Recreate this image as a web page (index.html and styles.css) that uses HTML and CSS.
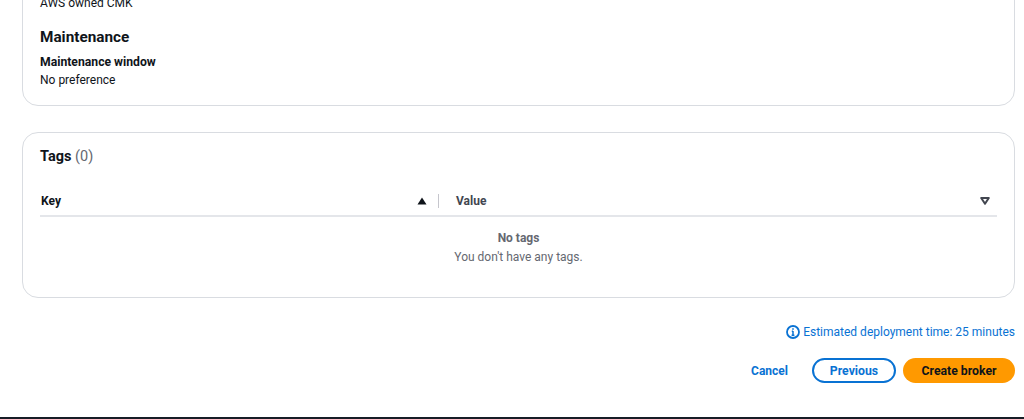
FILE: index.html
```html
<!DOCTYPE html>
<html lang="en">
<head>
    <meta charset="UTF-8">
    <meta name="viewport" content="width=device-width, initial-scale=1.0">
    <title>Create broker</title>
    <link rel="stylesheet" href="styles.css">
</head>
<body>
    <main class="page">
        <section class="card card-top">
            <p class="value">AWS owned CMK</p>
            <h2 class="section-title">Maintenance</h2>
            <p class="label">Maintenance window</p>
            <p class="value">No preference</p>
        </section>

        <section class="card card-tags">
            <h2 class="tags-title">Tags <span class="count">(0)</span></h2>
            <div class="table-head">
                <div class="col col-key">
                    <span>Key</span>
                    <svg class="sort" width="10" height="8" viewBox="0 0 10 8"><path d="M5 .5 9.5 7.5H.5z" fill="#0f141a"/></svg>
                </div>
                <div class="col col-value">
                    <span>Value</span>
                    <svg class="sort" width="10" height="8" viewBox="0 0 10 8"><path d="M1.2 1h7.6L5 6.8z" fill="none" stroke="#424650" stroke-width="2" stroke-linejoin="round"/></svg>
                </div>
            </div>
            <div class="empty">
                <p class="empty-title">No tags</p>
                <p class="empty-text">You don't have any tags.</p>
            </div>
        </section>

        <p class="estimate">
            <svg width="14" height="14" viewBox="0 0 14 14"><circle cx="7" cy="7" r="6" fill="none" stroke="#0972d3" stroke-width="1.8"/><path d="M7 6v4.2M5.6 10.2h2.8M5.8 6.2H7" fill="none" stroke="#0972d3" stroke-width="1.5"/><path d="M6.2 3.2h1.6v1.5H6.2z" fill="#0972d3"/></svg>
            Estimated deployment time: 25 minutes
        </p>

        <div class="actions">
            <a class="btn-link" href="#">Cancel</a>
            <button class="btn btn-normal">Previous</button>
            <button class="btn btn-primary">Create broker</button>
        </div>
    </main>
    <div class="bottom-bar"></div>
</body>
</html>
```

FILE: styles.css
```css
* {
    box-sizing: border-box;
}
body {
    margin: 0;
    height: 419px;
    overflow: hidden;
    display: flex;
    flex-direction: column;
    background: #fff;
    color: #0f141a;
    font-family: Roboto, Arial, sans-serif;
    font-size: 12px;
    line-height: 18px;
}
p, h2 {
    margin: 0;
}
.page {
    flex: 1;
    padding: 0 9px 0 22px;
}
.card {
    border: 1px solid #d9dce1;
    border-radius: 16px;
    padding: 0 17px;
}
.card-top {
    margin-top: -20px;
    height: 126px;
    padding-top: 13px;
}
.section-title {
    margin-top: 15px;
    font-size: 15.3px;
    line-height: 20px;
    font-weight: 700;
}
.label {
    margin-top: 6px;
    font-size: 12.2px;
    font-weight: 700;
}
.card-tags {
    margin-top: 26px;
    height: 166px;
}
.tags-title {
    margin-top: 14px;
    font-size: 14.5px;
    line-height: 20px;
    font-weight: 700;
}
.count {
    font-weight: 400;
    color: #656871;
}
.table-head {
    display: flex;
    align-items: center;
    margin-top: 17px;
    padding-top: 2px;
    height: 33px;
    border-bottom: 2px solid #e4e6ea;
    font-weight: 700;
    color: #424650;
}
.col {
    display: flex;
    align-items: center;
    justify-content: space-between;
}
.col-key {
    width: 398px;
    padding: 0 11px 0 1px;
    color: #0f141a;
}
.col-value {
    flex: 1;
    height: 14px;
    padding: 0 7px 0 17px;
    border-left: 1px solid #c6c6cd;
}
.empty {
    margin-top: 12px;
    text-align: center;
    color: #656871;
}
.empty-title {
    font-weight: 700;
}
.empty-text {
    margin-top: 1px;
}
.estimate {
    display: flex;
    align-items: center;
    justify-content: flex-end;
    gap: 3px;
    margin-top: 25px;
    color: #0972d3;
}
.actions {
    display: flex;
    align-items: center;
    justify-content: flex-end;
    margin-top: 17px;
}
.btn-link {
    margin-right: 24px;
    color: #0972d3;
    font-weight: 700;
    text-decoration: none;
}
.btn {
    height: 25px;
    border-radius: 13px;
    font: 700 12.25px/18px Roboto, Arial, sans-serif;
    padding: 0;
}
.btn-normal {
    width: 84px;
    margin-right: 7px;
    background: #fff;
    border: 2px solid #0972d3;
    color: #0972d3;
}
.btn-primary {
    width: 112px;
    background: #ff9900;
    border: 0;
    color: #0f141a;
}
.bottom-bar {
    height: 2px;
    background: #161d26;
}
```
